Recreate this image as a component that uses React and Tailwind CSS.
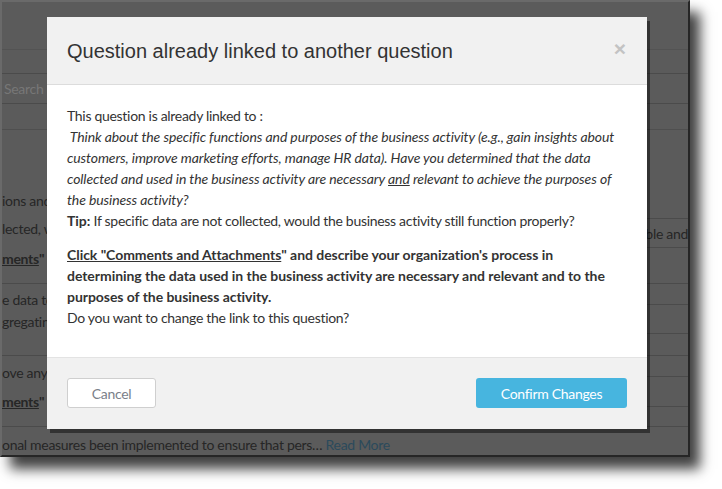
import React from "react";

const body = { fontFamily: 'Lato, "Open Sans", sans-serif' };

export default function App() {
  return (
    <div className="w-[722px] h-[489px] bg-white overflow-hidden">
      <div
        className="relative w-[690px] h-[457px] overflow-hidden bg-[#5b5b5b] border-t-2 border-l-2 border-r-2 border-b-2 border-t-[#6a6a6a] border-l-[#6a6a6a] border-r-[#262626] border-b-[#262626] shadow-[10px_12px_12px_rgba(0,0,0,0.75)]"
        style={body}
      >
        {/* background page */}
        <div className="flex flex-col text-[14px] text-[#262626] tracking-[-0.3px]">
          <div className="h-[48px] border-b border-[#535353]" />
          <div className="h-[24px] border-b border-[#4b4b4b]" />
          <div className="h-[30px] border-b border-[#4b4b4b] flex items-center pl-[2px] text-[#777]">
            Search Questions
          </div>
          <div className="h-[26px] border-b border-[#4f4f4f]" />
          <div className="flex">
            <div className="w-[600px] flex flex-col">
              <div className="h-[54px]" />
              <div className="h-[100px] border-b border-[#4b4b4b] flex flex-col pt-[3px]">
                <div className="h-[28px] leading-[28px] whitespace-nowrap">ions and</div>
                <div className="h-[30px] leading-[28px] whitespace-nowrap">lected, w</div>
                <div className="h-[28px] leading-[28px] whitespace-nowrap font-bold">
                  <span className="underline">ments</span>"
                </div>
              </div>
              <div className="h-[72px] border-b border-[#4b4b4b] flex flex-col pt-[5px]">
                <div className="h-[22px] leading-[22px] whitespace-nowrap">e data to</div>
                <div className="h-[22px] leading-[22px] whitespace-nowrap">gregatin</div>
              </div>
              <div className="h-[71px] border-b border-[#4b4b4b] flex flex-col pt-[3px]">
                <div className="h-[29px] leading-[28px] whitespace-nowrap">ove any</div>
                <div className="h-[28px] leading-[28px] whitespace-nowrap font-bold">
                  <span className="underline">ments</span>"
                </div>
              </div>
              <div className="h-[28px] flex items-center whitespace-nowrap pt-[6px]">
                onal measures been implemented to ensure that pers…&nbsp;
                <span className="text-[#2b4a5b]">Read More</span>
              </div>
            </div>
            <div className="flex-1 flex flex-col">
              <div className="h-[89px] border-b border-[#4b4b4b]" />
              <div className="h-[29px] border-b border-[#4b4b4b] flex items-center pl-[45px] whitespace-nowrap overflow-hidden">
                ble and
              </div>
              <div className="h-[36px] border-b border-[#4b4b4b]" />
              <div className="h-[21px] border-b border-[#4b4b4b]" />
              <div className="h-[29px] border-b border-[#4b4b4b]" />
              <div className="h-[22px] border-b border-[#4b4b4b]" />
              <div className="h-[21px] border-b border-[#4b4b4b]" />
              <div className="h-[30px] border-b border-[#4b4b4b]" />
              <div className="h-[20px] border-b border-[#4b4b4b]" />
            </div>
          </div>
        </div>

        {/* modal */}
        <div className="absolute left-[45px] top-[15px] w-[600px] bg-white shadow-[3px_4px_0_rgba(0,0,0,0.45)]">
          <div className="bg-[#f1f1f1] border-b border-[#dcdcdc] pl-[20px] pr-[21px] pt-[20px] pb-[19px] flex items-center justify-between">
            <div
              className="text-[20px] leading-[28px] text-[#333]"
              style={{ fontFamily: '"Liberation Sans", Arial, sans-serif' }}
            >
              Question already linked to another question
            </div>
            <div
              className="text-[21px] leading-[21px] font-bold text-[#c3c3c3] -mt-[6px]"
              style={{ fontFamily: '"Liberation Sans", Arial, sans-serif' }}
            >
              ×
            </div>
          </div>
          <div className="px-[20px] pt-[20px] pb-[29px] text-[14px] leading-[21px] text-[#333] whitespace-nowrap tracking-[-0.3px]">
            <div>This question is already linked to :</div>
            <div className="italic tracking-[-0.1px]">
              &nbsp;Think about the specific functions and purposes of the business activity (e.g., gain insights about
              <br />
              customers, improve marketing efforts, manage HR data). Have you determined that the data
              <br />
              collected and used in the business activity are necessary <span className="underline">and</span> relevant to achieve the purposes of
              <br />
              the business activity?
            </div>
            <div>
              <span className="font-bold tracking-[-0.05px]">Tip:</span> If specific data are not collected, would the business activity still function properly?
            </div>
            <div className="font-bold mt-[13px] tracking-[-0.05px]">
              <span className="underline">Click "Comments and Attachments</span>" and describe your organization's process in
              <br />
              determining the data used in the business activity are necessary and relevant and to the
              <br />
              purposes of the business activity.
            </div>
            <div>Do you want to change the link to this question?</div>
          </div>
          <div className="bg-[#f1f1f1] border-t border-[#e3e3e3] px-[20px] pt-[20px] pb-[21px] flex justify-between">
            <button className="w-[89px] h-[30px] bg-white border border-[#cfcfcf] rounded-[3px] text-[14px] text-[#7a8089] tracking-[-0.3px]">
              Cancel
            </button>
            <button className="w-[151px] h-[30px] bg-[#47b5df] rounded-[3px] text-[14px] text-white tracking-[-0.3px]">
              Confirm Changes
            </button>
          </div>
        </div>
      </div>
    </div>
  );
}
